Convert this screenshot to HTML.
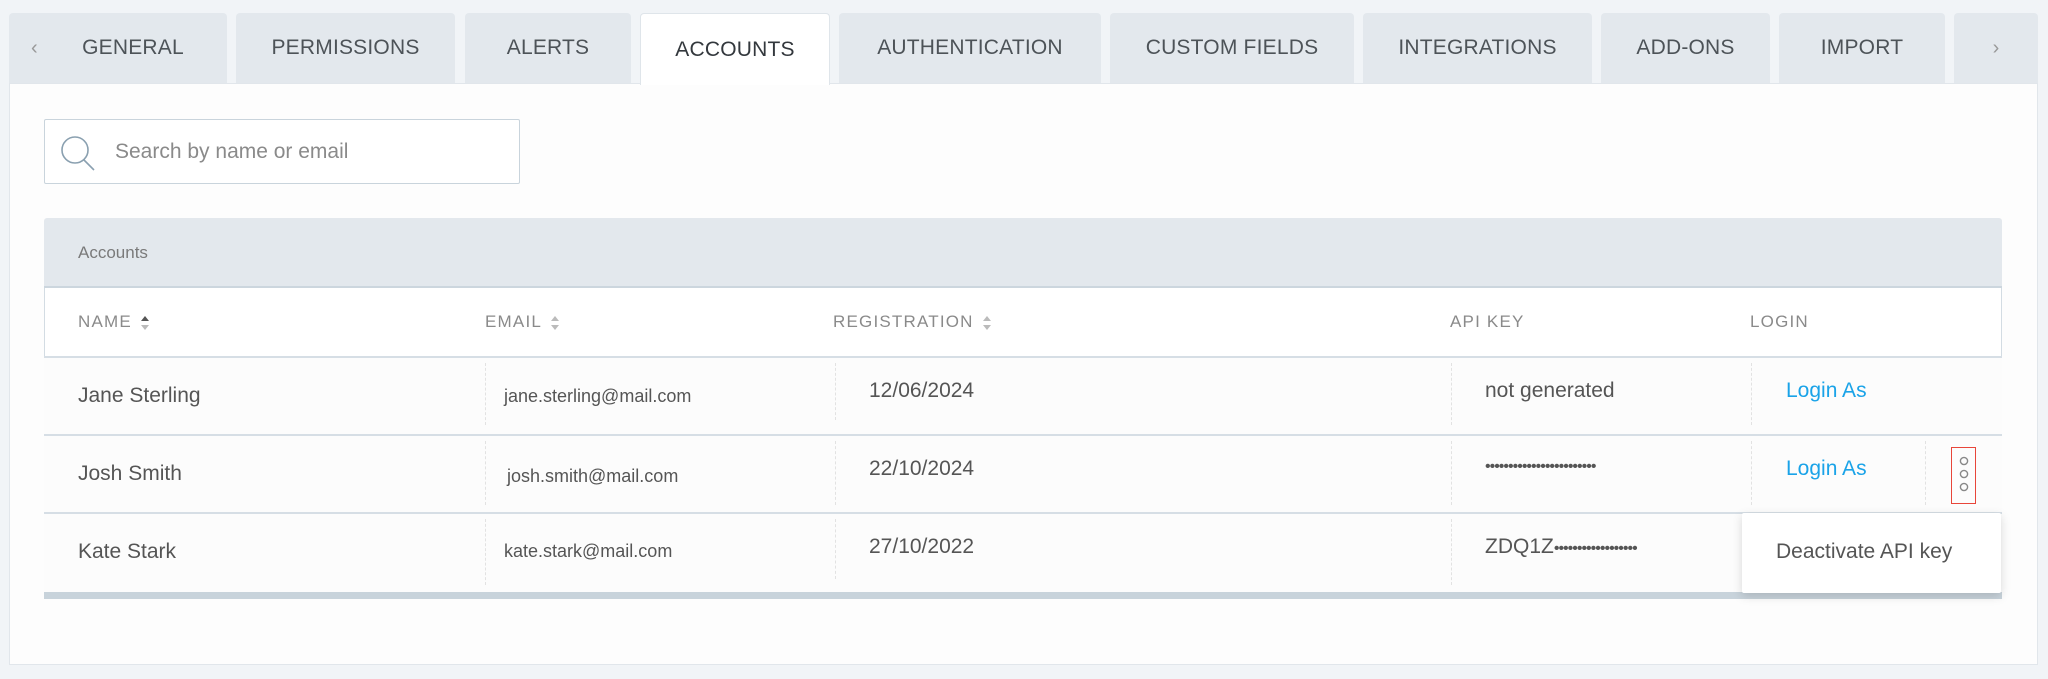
<!DOCTYPE html>
<html><head><meta charset="utf-8"><style>
*{box-sizing:border-box;margin:0;padding:0}
body{width:2048px;height:679px;background:#f1f4f7;font-family:"Liberation Sans",sans-serif;position:relative;overflow:hidden}
.a{position:absolute}
.tab{position:absolute;top:13px;height:70px;background:#e3e8ed;border-radius:4px 4px 0 0;display:flex;align-items:center;justify-content:center;font-size:21px;color:#4d5358;letter-spacing:0.2px}
.tab.on{background:#fff;color:#33383d;height:72px;border:1px solid #dfe5ea;border-bottom:none}
.panel{left:9px;top:83px;width:2029px;height:582px;background:#fdfdfd;border:1px solid #e1e6eb}
.th{position:absolute;top:312px;font-size:17px;color:#8a8a8a;letter-spacing:1.2px}
.row{position:absolute;left:44px;width:1958px;height:78px;background:#fcfcfc;border-top:2px solid #d6dee5}
.t{position:absolute;color:#555;font-size:21px}
.dv{position:absolute;width:0;border-left:1px dashed #e2e2e2}
.lg{color:#1aa3e8}
.sort{display:inline-block;vertical-align:middle;margin-left:8px;width:10px}
.dots{font-size:16px;letter-spacing:-1px;color:#555}
</style></head><body>
<div class="tab" style="left:9px;width:218px"><span class="a" style="left:22px;color:#999;font-size:20px">‹</span><span style="margin-left:30px">GENERAL</span></div>
<div class="tab" style="left:236px;width:219px">PERMISSIONS</div>
<div class="tab" style="left:465px;width:166px">ALERTS</div>
<div class="tab" style="left:1110px;width:244px">CUSTOM FIELDS</div>
<div class="tab" style="left:1363px;width:229px">INTEGRATIONS</div>
<div class="tab" style="left:1601px;width:169px">ADD-ONS</div>
<div class="tab" style="left:1779px;width:166px">IMPORT</div>
<div class="tab" style="left:1954px;width:84px;color:#999;font-size:20px">›</div>
<div class="tab" style="left:839px;width:262px">AUTHENTICATION</div>
<div class="a panel"></div>
<div class="tab on" style="left:640px;width:190px">ACCOUNTS</div>

<div class="a" style="left:44px;top:119px;width:476px;height:65px;background:#fff;border:1.5px solid #c9d4dc;border-radius:2px"></div>
<svg class="a" style="left:58px;top:134px" width="40" height="38" viewBox="0 0 40 38"><circle cx="17" cy="16" r="13" fill="none" stroke="#8aa0b0" stroke-width="1.6"/><line x1="26" y1="26" x2="36" y2="36" stroke="#8aa0b0" stroke-width="1.6"/></svg>
<div class="a" style="left:115px;top:140px;font-size:21px;color:#8a8a8a">Search by name or email</div>

<div class="a" style="left:44px;top:218px;width:1958px;height:70px;background:#e3e8ed;border-radius:3px 3px 0 0;border-bottom:2px solid #ccd6de"></div>
<div class="a" style="left:78px;top:243px;font-size:17px;color:#7a7a7a">Accounts</div>
<div class="a" style="left:44px;top:288px;width:1958px;height:310px;background:#fff;border-left:1.5px solid #d3dce3;border-right:1.5px solid #d3dce3"></div>

<div class="th" style="left:78px">NAME<svg class="sort" width="10" height="18" viewBox="0 0 10 18"><path d="M1 7L5 2L9 7Z" fill="#555"/><path d="M1 11L5 16L9 11Z" fill="#bbb"/></svg></div>
<div class="th" style="left:485px">EMAIL<svg class="sort" width="10" height="18" viewBox="0 0 10 18"><path d="M1 7L5 2L9 7Z" fill="#bbb"/><path d="M1 11L5 16L9 11Z" fill="#bbb"/></svg></div>
<div class="th" style="left:833px">REGISTRATION<svg class="sort" width="10" height="18" viewBox="0 0 10 18"><path d="M1 7L5 2L9 7Z" fill="#bbb"/><path d="M1 11L5 16L9 11Z" fill="#bbb"/></svg></div>
<div class="th" style="left:1450px">API KEY</div>
<div class="th" style="left:1750px">LOGIN</div>

<div class="row" style="top:356px"></div>
<div class="row" style="top:434px"></div>
<div class="row" style="top:512px;height:80px"></div>
<div class="a" style="left:44px;top:592px;width:1958px;height:7px;background:#c8d3db"></div>

<div class="dv" style="left:485px;top:363px;height:62px"></div><div class="dv" style="left:835px;top:363px;height:57px"></div><div class="dv" style="left:1451px;top:363px;height:62px"></div><div class="dv" style="left:1751px;top:363px;height:62px"></div>
<div class="dv" style="left:485px;top:441px;height:64px"></div><div class="dv" style="left:835px;top:441px;height:64px"></div><div class="dv" style="left:1451px;top:441px;height:64px"></div><div class="dv" style="left:1751px;top:441px;height:64px"></div><div class="dv" style="left:1925px;top:441px;height:64px"></div>
<div class="dv" style="left:485px;top:519px;height:66px"></div><div class="dv" style="left:835px;top:519px;height:60px"></div><div class="dv" style="left:1451px;top:519px;height:66px"></div>

<div class="t" style="left:78px;top:384px">Jane Sterling</div>
<div class="t" style="left:504px;top:386px;font-size:18px">jane.sterling@mail.com</div>
<div class="t" style="left:869px;top:379px">12/06/2024</div>
<div class="t" style="left:1485px;top:379px">not generated</div>
<div class="t lg" style="left:1786px;top:379px">Login As</div>

<div class="t" style="left:78px;top:462px">Josh Smith</div>
<div class="t" style="left:507px;top:466px;font-size:18px">josh.smith@mail.com</div>
<div class="t" style="left:869px;top:457px">22/10/2024</div>
<div class="t dots" style="left:1485px;top:458px">••••••••••••••••••••••••</div>
<div class="t lg" style="left:1786px;top:457px">Login As</div>
<div class="a" style="left:1951px;top:447px;width:25px;height:57px;border:1.5px solid #e8463a"></div>
<svg class="a" style="left:1957px;top:453px" width="14" height="44" viewBox="0 0 14 44"><circle cx="7" cy="8" r="3.6" fill="none" stroke="#888" stroke-width="1.4"/><circle cx="7" cy="21" r="3.6" fill="none" stroke="#888" stroke-width="1.4"/><circle cx="7" cy="34" r="3.6" fill="none" stroke="#888" stroke-width="1.4"/></svg>

<div class="t" style="left:78px;top:540px">Kate Stark</div>
<div class="t" style="left:504px;top:541px;font-size:18px">kate.stark@mail.com</div>
<div class="t" style="left:869px;top:535px">27/10/2022</div>
<div class="t" style="left:1485px;top:535px">ZDQ1Z<span class="dots">••••••••••••••••••</span></div>

<div class="a" style="left:1742px;top:513px;width:259px;height:80px;background:#fff;box-shadow:0 3px 10px rgba(0,0,0,0.15);border-radius:2px"></div>
<div class="t" style="left:1776px;top:540px">Deactivate API key</div>
</body></html>
